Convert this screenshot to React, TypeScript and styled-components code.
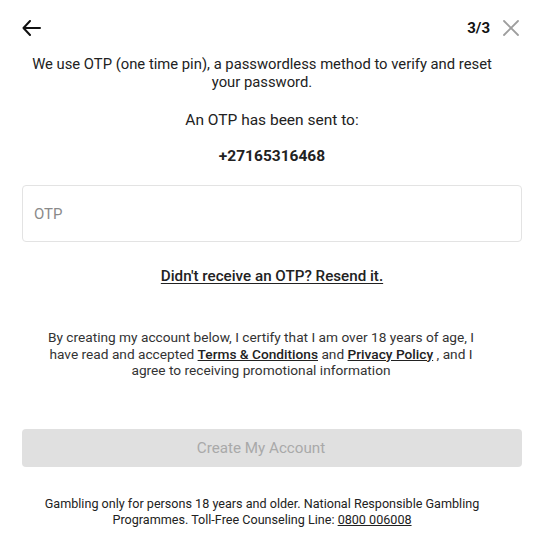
import React from "react";
import styled, { createGlobalStyle } from "styled-components";

const Global = createGlobalStyle`
  html, body { margin: 0; padding: 0; background: #ffffff; }
  body { font-family: Roboto, "Noto Sans", Arial, sans-serif; color: #212121; }
  * { box-sizing: border-box; }
`;

const Page = styled.div`
  width: 543px;
  padding: 0 21px 0 22px;
  display: flex;
  flex-direction: column;
  align-items: stretch;
`;

const Header = styled.div`
  height: 55px;
  padding-right: 2px;
  display: flex;
  align-items: center;
  justify-content: space-between;
`;

const IconButton = styled.button`
  border: 0;
  background: none;
  padding: 0;
  display: flex;
  align-items: center;
  justify-content: center;
  cursor: pointer;
`;

const HeaderRight = styled.div`
  display: flex;
  align-items: center;
  gap: 12px;
`;

const Step = styled.span`
  font-weight: 700;
  font-size: 15px;
  color: #111;
`;

const Text = styled.p<{ $bold?: boolean; $mt?: number; $size?: number; $shift?: number }>`
  margin: ${(p) => p.$mt ?? 0}px 0 0;
  padding-right: ${(p) => p.$shift ?? 0}px;
  text-align: center;
  font-size: ${(p) => p.$size ?? 15.5}px;
  line-height: 18px;
  font-weight: ${(p) => (p.$bold ? 700 : 400)};
  color: #222;
`;

const Input = styled.input`
  margin-top: 20px;
  height: 57px;
  width: 100%;
  border: 1px solid #e3e3e3;
  border-radius: 4px;
  padding: 0 11px;
  font-family: inherit;
  font-size: 15px;
  color: #222;
  outline: none;
  &::placeholder { color: #8a8a8a; }
`;

const ResendLink = styled.a`
  margin-top: 25px;
  align-self: center;
  font-size: 15.2px;
  font-weight: 500;
  color: #222;
  text-decoration: underline;
  text-underline-offset: 2px;
  line-height: 19px;
`;

const Legal = styled.p`
  margin: 43px 0 0;
  padding: 0 46px 0 24px;
  text-align: center;
  font-size: 13.7px;
  line-height: 16.5px;
  color: #333;
`;

const InlineLink = styled.a`
  font-weight: 500;
  color: #222;
  text-decoration: underline;
`;

const SubmitButton = styled.button`
  margin-top: 50px;
  height: 38px;
  width: 100%;
  border: 0;
  border-radius: 4px;
  padding: 0 22px 0 0;
  background: #e0e0e0;
  color: #a9a9a9;
  font-family: inherit;
  font-size: 15.2px;
`;

const Footer = styled.p`
  margin: 29px 0 0;
  padding-right: 20px;
  text-align: center;
  font-size: 12.6px;
  line-height: 16px;
  color: #222;
`;

const PhoneLink = styled.a`
  color: #222;
  text-decoration: underline;
`;

export default function App() {
  return (
    <>
      <Global />
      <Page>
        <Header>
          <IconButton aria-label="Back">
            <svg width="20" height="16" viewBox="0 0 20 16" fill="none" stroke="#111" strokeWidth="2" strokeLinecap="round" strokeLinejoin="round">
              <path d="M18 8H2M8 1L1.5 8L8 15" />
            </svg>
          </IconButton>
          <HeaderRight>
            <Step>3/3</Step>
            <IconButton aria-label="Close">
              <svg width="18" height="18" viewBox="0 0 18 18" fill="none" stroke="#9e9e9e" strokeWidth="1.8" strokeLinecap="round">
                <path d="M2 2L16 16M16 2L2 16" />
              </svg>
            </IconButton>
          </HeaderRight>
        </Header>
        <Text $size={14.8} $shift={20}>
          We use OTP (one time pin), a passwordless method to verify and reset
          <br />
          your password.
        </Text>
        <Text $mt={20}>An OTP has been sent to:</Text>
        <Text $mt={18} $bold>+27165316468</Text>
        <Input placeholder="OTP" />
        <ResendLink href="#">Didn't receive an OTP? Resend it.</ResendLink>
        <Legal>
          By creating my account below, I certify that I am over 18 years of age, I have read and accepted{" "}
          <InlineLink href="#">Terms &amp; Conditions</InlineLink> and{" "}
          <InlineLink href="#">Privacy Policy</InlineLink> , and I agree to receiving promotional information
        </Legal>
        <SubmitButton disabled>Create My Account</SubmitButton>
        <Footer>
          Gambling only for persons 18 years and older. National Responsible Gambling
          <br />
          Programmes. Toll-Free Counseling Line: <PhoneLink href="#">0800 006008</PhoneLink>
        </Footer>
      </Page>
    </>
  );
}
